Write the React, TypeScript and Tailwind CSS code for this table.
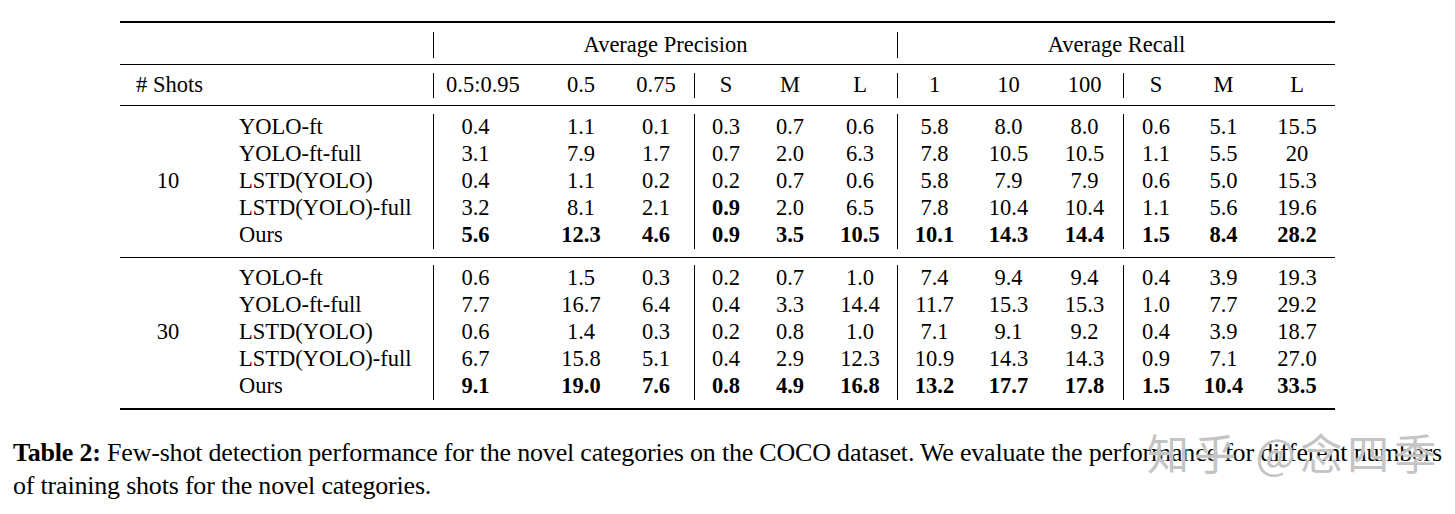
import React from "react";

/* ================= DATA ================= */
type Row = { name: string; vals: string[]; bold?: boolean[] };

const groups: { shots: string; rows: Row[] }[] = [
  {
    shots: "10",
    rows: [
      { name: "YOLO-ft", vals: ["0.4", "1.1", "0.1", "0.3", "0.7", "0.6", "5.8", "8.0", "8.0", "0.6", "5.1", "15.5"] },
      { name: "YOLO-ft-full", vals: ["3.1", "7.9", "1.7", "0.7", "2.0", "6.3", "7.8", "10.5", "10.5", "1.1", "5.5", "20"] },
      { name: "LSTD(YOLO)", vals: ["0.4", "1.1", "0.2", "0.2", "0.7", "0.6", "5.8", "7.9", "7.9", "0.6", "5.0", "15.3"] },
      {
        name: "LSTD(YOLO)-full",
        vals: ["3.2", "8.1", "2.1", "0.9", "2.0", "6.5", "7.8", "10.4", "10.4", "1.1", "5.6", "19.6"],
        bold: [false, false, false, true],
      },
      { name: "Ours", vals: ["5.6", "12.3", "4.6", "0.9", "3.5", "10.5", "10.1", "14.3", "14.4", "1.5", "8.4", "28.2"], bold: Array(12).fill(true) },
    ],
  },
  {
    shots: "30",
    rows: [
      { name: "YOLO-ft", vals: ["0.6", "1.5", "0.3", "0.2", "0.7", "1.0", "7.4", "9.4", "9.4", "0.4", "3.9", "19.3"] },
      { name: "YOLO-ft-full", vals: ["7.7", "16.7", "6.4", "0.4", "3.3", "14.4", "11.7", "15.3", "15.3", "1.0", "7.7", "29.2"] },
      { name: "LSTD(YOLO)", vals: ["0.6", "1.4", "0.3", "0.2", "0.8", "1.0", "7.1", "9.1", "9.2", "0.4", "3.9", "18.7"] },
      { name: "LSTD(YOLO)-full", vals: ["6.7", "15.8", "5.1", "0.4", "2.9", "12.3", "10.9", "14.3", "14.3", "0.9", "7.1", "27.0"] },
      { name: "Ours", vals: ["9.1", "19.0", "7.6", "0.8", "4.9", "16.8", "13.2", "17.7", "17.8", "1.5", "10.4", "33.5"], bold: Array(12).fill(true) },
    ],
  },
];

const heads = ["0.5:0.95", "0.5", "0.75", "S", "M", "L", "1", "10", "100", "S", "M", "L"];

// per value column: extra classes (vertical rule + centering nudges)
const colCls = [
  "border-l border-black pr-[11px]",
  "pl-[16px]",
  "",
  "border-l border-black",
  "",
  "",
  "border-l border-black",
  "",
  "",
  "border-l border-black",
  "",
  "",
];

const headCls = [
  "border-l border-black pl-[4px]",
  "pl-[16px]",
  "",
  "border-l border-black",
  "",
  "",
  "border-l border-black",
  "",
  "",
  "border-l border-black",
  "",
  "",
];

const GRID =
  "grid grid-cols-[96px_217px_95px_90px_76px_63px_66px_74px_74px_75px_77px_65px_71px_76px]";

/* ================= TABLE ================= */
function Group({ g, pt }: { g: (typeof groups)[number]; pt: string }) {
  return (
    <div className={`${pt} pb-[8px]`}>
      <div className={`${GRID} auto-rows-[27px]`}>
        <div className="row-span-5 flex items-center justify-center">{g.shots}</div>
        {g.rows.map((r) => (
          <React.Fragment key={r.name}>
            <div className="col-start-2 flex items-center pl-[23px]">{r.name}</div>
            {r.vals.map((v, i) => (
              <div
                key={i}
                className={`flex items-center justify-center ${colCls[i]} ${r.bold?.[i] ? "font-bold" : ""}`}
              >
                {v}
              </div>
            ))}
          </React.Fragment>
        ))}
      </div>
    </div>
  );
}

export default function App() {
  return (
    <div className="relative w-[1455px] h-[514px] overflow-hidden bg-white text-black font-['Liberation_Serif',serif]">
      <div className="ml-[120px] pt-[21px] w-[1215px] text-[22.5px] leading-none">
        <div className="h-[2px] bg-black" />

        {/* ── Header 1 ── */}
        <div className="pt-[9px] pb-[6px]">
          <div className={`${GRID} h-[26px]`}>
            <div className="col-span-2" />
            <div className="col-span-6 border-l border-black flex items-center justify-center">
              Average Precision
            </div>
            <div className="col-span-6 border-l border-black flex items-center justify-center">
              Average Recall
            </div>
          </div>
        </div>
        <div className="h-px bg-black" />

        {/* ── Header 2 ── */}
        <div className="pt-[8px] pb-[7px]">
          <div className={`${GRID} h-[25px]`}>
            <div className="col-span-2 flex items-center pl-[16px]"># Shots</div>
            {heads.map((h, i) => (
              <div key={i} className={`flex items-center justify-center ${headCls[i]}`}>
                {h}
              </div>
            ))}
          </div>
        </div>
        <div className="h-px bg-black" />

        <Group g={groups[0]} pt="pt-[8px]" />
        <div className="h-px bg-black" />
        <Group g={groups[1]} pt="pt-[7px]" />
        <div className="h-[2px] bg-black" />
      </div>

      {/* ── Caption ── */}
      <p className="mt-[26px] px-[13px] text-[26px] leading-[33px] tracking-[-0.2px]">
        <span className="font-bold">Table 2:</span> Few-shot detection performance for the novel categories on
        the COCO dataset. We evaluate the performance for different numbers of training shots for the novel
        categories.
      </p>

      {/* watermark */}
      <div className="absolute left-[1147px] top-[431px] text-[42px] leading-none tracking-[5px] text-[#c4c4c4] [text-shadow:0_0_2px_#fff] font-['Noto_Sans_CJK_SC',sans-serif]">
        知乎 @念四季
      </div>
    </div>
  );
}
